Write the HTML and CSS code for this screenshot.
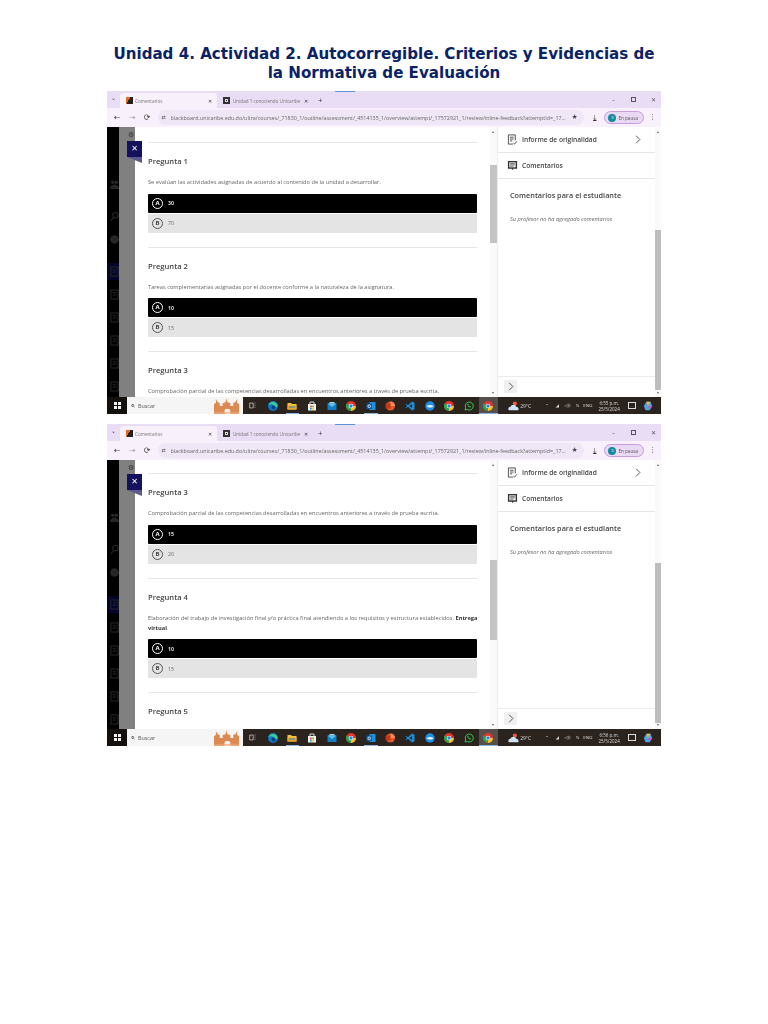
FILE: index.html
```html
<!DOCTYPE html>
<html lang="es">
<head>
<meta charset="utf-8">
<title>Unidad 4. Actividad 2</title>
<link rel="stylesheet" href="styles.css">
</head>
<body>
<svg class="defs" width="0" height="0" aria-hidden="true">
  <symbol id="chrome" viewBox="0 0 20 20"><circle cx="10" cy="10" r="10" fill="#e5352b"/><path d="M10 10 1.3 5A10 10 0 0 0 10 20z" fill="#2ea44f"/><path d="M10 10h10a10 10 0 0 1-10 10z" fill="#f7c325"/><circle cx="10" cy="10" r="4.6" fill="#fff"/><circle cx="10" cy="10" r="3.4" fill="#2f7fe0"/></symbol>
  <symbol id="edge" viewBox="0 0 20 20"><circle cx="10" cy="10" r="10" fill="#0f79c9"/><path d="M1 8C3 1 15-1 19 8c1 4-3 5-6 4 1-5-8-7-12-4z" fill="#3ecf8e"/><circle cx="11" cy="13" r="4" fill="#0b3f80"/></symbol>
  <symbol id="folder" viewBox="0 0 20 20"><path d="M1 4h7l2 2h9v11H1z" fill="#f5c542"/><path d="M1 9h18v8H1z" fill="#e8a825"/><path d="M4 11h12v2H4z" fill="#2a86c8"/></symbol>
  <symbol id="store" viewBox="0 0 20 20"><path d="M2 6h16v13H2z" fill="#f2f2f2"/><path d="M6 6V2h8v4" fill="none" stroke="#ddd" stroke-width="2"/><path d="M6 9h3.500v3.500H6z" fill="#e8502f"/><path d="M10.500 9H14v3.500h-3.500z" fill="#7db52f"/><path d="M6 13.500h3.500V17H6z" fill="#1f9be0"/><path d="M10.500 13.500H14V17h-3.500z" fill="#f5c023"/></symbol>
  <symbol id="mail" viewBox="0 0 20 20"><path d="M1 5h18v13H1z" fill="#1380c4"/><path d="M1 5h18l-9 7z" fill="#5cc1ee"/><path d="M5 2h10v3H5z" fill="#9adcf5"/></symbol>
  <symbol id="outlook" viewBox="0 0 20 20"><path d="M7 2h12v16H7z" fill="#1f8fe0"/><path d="M1 5h11v11H1z" fill="#0b5cab"/><circle cx="6.500" cy="10.500" r="2.600" fill="none" stroke="#fff" stroke-width="1.500"/></symbol>
  <symbol id="ppt" viewBox="0 0 20 20"><circle cx="11" cy="10" r="9" fill="#e8582f"/><path d="M11 1a9 9 0 0 1 9 9h-9z" fill="#f58b5c"/><path d="M1 5h10v10H1z" fill="#c0391b"/></symbol>
  <symbol id="vscode" viewBox="0 0 20 20"><path d="M14 1l5 2.500v13L14 19 6 11.500 2.500 14 1 13l3.500-3L1 7l1.500-1L6 8.500zM14 6l-5 4 5 4z" fill="#1b8fdc"/></symbol>
  <symbol id="bluebird" viewBox="0 0 20 20"><circle cx="10" cy="10" r="9.500" fill="#1c8fe6"/><path d="M3 10c3-3 11-3 14 0-2 4-11 4-14 0z" fill="#dff1fc"/></symbol>
  <symbol id="whatsapp" viewBox="0 0 20 20"><path d="M2 18l1.300-4.500A8 8 0 1 1 6.500 17z" fill="none" stroke="#37c75a" stroke-width="2"/><path d="M7 6c-1 2 2 7 6 7l1-2-2-1-1 1c-1-.5-2-1.500-2.500-2.500l1-1-1-2z" fill="#37c75a"/></symbol>
  <symbol id="report" viewBox="0 0 12 12"><path d="M1.500 1h7.500v6M1.500 1v10h5M3.200 3.500h4M3.200 5.500h4M3.200 7.500h2.500M7 10l1.200 1 2.500-3" fill="none" stroke="#333" stroke-width=".9"/></symbol>
  <symbol id="comment" viewBox="0 0 12 12"><path d="M1 1h10v8.500H7L6 11 5 9.500H1z" fill="#333"/><path d="M2.500 2.500h7v5.500h-7z" fill="#eee"/><path d="M3.500 3.700h5M3.500 5.200h5M3.500 6.700h3.500" stroke="#333" stroke-width=".7"/></symbol>
  <symbol id="chev" viewBox="0 0 8 12"><path d="M1.500 1l5 5-5 5" fill="none" stroke="#444" stroke-width="1.200"/></symbol>
  <symbol id="railicon" viewBox="0 0 10 12"><path d="M1 1h8v10H1zM3 4h4M3 6.500h4" fill="none" stroke="#262626" stroke-width="1.200"/></symbol>
  <symbol id="railperson" viewBox="0 0 10 12"><circle cx="3" cy="3.500" r="2" fill="#262626"/><circle cx="7" cy="3.500" r="2" fill="#262626"/><path d="M0 11c0-4 4-5 5-5s5 1 5 5z" fill="#262626"/></symbol>
  <symbol id="railsearch" viewBox="0 0 10 12"><circle cx="6" cy="4.500" r="3" fill="none" stroke="#262626" stroke-width="1.200"/><path d="M4 7 1 11" stroke="#262626" stroke-width="1.200"/></symbol>
  <symbol id="railglobe" viewBox="0 0 10 12"><circle cx="5" cy="6" r="4.800" fill="#262626"/></symbol>
  <symbol id="taskview" viewBox="0 0 10 10"><path d="M1 1.500h5v7H1zM8 1.500h1.200M8 4.500h1.200M8 7.500h1.200" fill="none" stroke="#ddd" stroke-width="1"/></symbol>
  <symbol id="palace" viewBox="0 0 26 16"><path d="M0 16V6l2-1v-4l2 3 2 1v3h3V5l3-1 1-4 1 4 3 1v3h3V5l2-1 2-3v4l2 1v10h-9v-3a1.500 1.500 0 0 0-4 0v3z" fill="#dc8a52"/><path d="M11 16v-3a2 2 0 0 1 4 0v3z" fill="#fff"/><path d="M0 14h26v2H0z" fill="#f0a36f" opacity=".7"/></symbol>
  <symbol id="cloud" viewBox="0 0 16 14"><circle cx="10" cy="3.500" r="3" fill="#ef5a3c"/><path d="M1 13c-1.500-3 .5-5 2.500-5C5 4 11 4 12 8c3 0 4 3 3 5z" fill="#cfe3f7"/></symbol>
  <symbol id="copilot" viewBox="0 0 12 12"><path d="M1 6 4 1h5l2 5-3 5H3z" fill="#4aa5e0"/><path d="M4 1h5L6 6z" fill="#f3b23c"/><path d="M6 6l5 0-3 5z" fill="#c55bd0"/></symbol>
</svg>

<main class="page">
  <h1 class="title">Unidad 4. Actividad 2. Autocorregible. Criterios y Evidencias de la Normativa de Evaluación</h1>

  <section class="window">
    <div class="tabstrip">
      <span class="tab-menu">⌄</span>
      <div class="tab tab-active"><span class="favicon favicon-bb"></span><span class="tab-label">Comentarios</span><span class="tab-x">✕</span></div>
      <div class="tab"><span class="favicon favicon-doc"></span><span class="tab-label">Unidad 1 conociendo Unicaribe</span><span class="tab-x">✕</span></div>
      <span class="tab-plus">+</span>
      <span class="tab-mark"></span>
      <div class="win-controls"><span>–</span><span class="win-restore"></span><span>✕</span></div>
    </div>
    <div class="toolbar">
      <span class="nav">←</span><span class="nav nav-dim">→</span><span class="nav">⟳</span>
      <div class="omnibox"><span class="tune">⇄</span><span class="url">blackboard.unicaribe.edu.do/ultra/courses/_71830_1/outline/assessment/_4514135_1/overview/attempt/_17572921_1/review/inline-feedback?attemptId=_17...</span><span class="star">★</span></div>
      <span class="download">⤓</span>
      <div class="pill"><span class="pill-dot">S</span><span class="pill-text">En pausa</span></div>
      <span class="kebab">⋮</span>
    </div>
    <div class="content">
      <div class="rail-black">
        <svg class="rail-svg"><use href="#railperson"/></svg>
        <svg class="rail-svg rail-gap"><use href="#railsearch"/></svg>
        <svg class="rail-svg"><use href="#railglobe"/></svg>
        <svg class="rail-svg rail-on rail-gap"><use href="#railicon"/></svg>
        <svg class="rail-svg"><use href="#railicon"/></svg>
        <svg class="rail-svg"><use href="#railicon"/></svg>
        <svg class="rail-svg"><use href="#railicon"/></svg>
        <svg class="rail-svg"><use href="#railicon"/></svg>
        <svg class="rail-svg"><use href="#railicon"/></svg>
      </div>
      <div class="rail-gray"><span class="gear">⚙</span></div>
      <button class="close-flag" type="button">✕</button>
      <div class="main-col">
        <article class="question">
          <h2>Pregunta 1</h2>
          <p>Se evalúan las actividades asignadas de acuerdo al contenido de la unidad a desarrollar.</p>
          <div class="answer answer-on"><span class="letter">A</span><span>30</span></div>
          <div class="answer"><span class="letter">B</span><span>70</span></div>
        </article>
        <article class="question">
          <h2>Pregunta 2</h2>
          <p>Tareas complementarias asignadas por el docente conforme a la naturaleza de la asignatura.</p>
          <div class="answer answer-on"><span class="letter">A</span><span>10</span></div>
          <div class="answer"><span class="letter">B</span><span>15</span></div>
        </article>
        <article class="question">
          <h2>Pregunta 3</h2>
          <p>Comprobación parcial de las competencias desarrolladas en encuentros anteriores a través de prueba escrita.</p>
        </article>
      </div>
      <div class="scrollbar"><span class="thumb thumb-a"></span></div>
      <aside class="panel">
        <div class="panel-row"><svg class="panel-icon"><use href="#report"/></svg><span class="panel-label">Informe de originalidad</span><svg class="panel-chev"><use href="#chev"/></svg></div>
        <div class="panel-row"><svg class="panel-icon"><use href="#comment"/></svg><span class="panel-label">Comentarios</span></div>
        <div class="panel-body">
          <h3>Comentarios para el estudiante</h3>
          <p>Su profesor no ha agregado comentarios</p>
        </div>
        <div class="panel-foot"><span class="foot-btn"><svg class="foot-chev"><use href="#chev"/></svg></span></div>
      </aside>
      <div class="scrollbar scrollbar-thin"><span class="thumb thumb-b"></span></div>
    </div>
    <div class="taskbar">
      <span class="start"><i></i><i></i><i></i><i></i></span>
      <div class="searchbox"><span class="lens">⌕</span><span class="search-text">Buscar</span><svg class="palace"><use href="#palace"/></svg></div>
      <svg class="tb-view"><use href="#taskview"/></svg>
      <span class="tb"><svg><use href="#edge"/></svg></span>
      <span class="tb tb-open"><svg><use href="#folder"/></svg></span>
      <span class="tb"><svg><use href="#store"/></svg></span>
      <span class="tb"><svg><use href="#mail"/></svg></span>
      <span class="tb"><svg><use href="#chrome"/></svg></span>
      <span class="tb tb-open"><svg><use href="#outlook"/></svg></span>
      <span class="tb"><svg><use href="#ppt"/></svg></span>
      <span class="tb"><svg><use href="#vscode"/></svg></span>
      <span class="tb"><svg><use href="#bluebird"/></svg></span>
      <span class="tb"><svg><use href="#chrome"/></svg></span>
      <span class="tb"><svg><use href="#whatsapp"/></svg></span>
      <span class="tb tb-active"><svg><use href="#chrome"/></svg></span>
      <div class="tray">
        <svg class="tray-cloud"><use href="#cloud"/></svg><span class="tray-temp">29°C</span>
        <span class="tray-item">^</span><span class="tray-item">◢</span><span class="tray-item">◁))</span><span class="tray-item">ℕ</span><span class="tray-item">ENG</span>
        <span class="clock"><span>6:55 p.m.</span><span>25/5/2024</span></span>
        <span class="notif"></span>
        <svg class="tray-copilot"><use href="#copilot"/></svg>
      </div>
    </div>
  </section>

  <section class="window window-second">
    <div class="tabstrip">
      <span class="tab-menu">⌄</span>
      <div class="tab tab-active"><span class="favicon favicon-bb"></span><span class="tab-label">Comentarios</span><span class="tab-x">✕</span></div>
      <div class="tab"><span class="favicon favicon-doc"></span><span class="tab-label">Unidad 1 conociendo Unicaribe</span><span class="tab-x">✕</span></div>
      <span class="tab-plus">+</span>
      <span class="tab-mark"></span>
      <div class="win-controls"><span>–</span><span class="win-restore"></span><span>✕</span></div>
    </div>
    <div class="toolbar">
      <span class="nav">←</span><span class="nav nav-dim">→</span><span class="nav">⟳</span>
      <div class="omnibox"><span class="tune">⇄</span><span class="url">blackboard.unicaribe.edu.do/ultra/courses/_71830_1/outline/assessment/_4514135_1/overview/attempt/_17572921_1/review/inline-feedback?attemptId=_17...</span><span class="star">★</span></div>
      <span class="download">⤓</span>
      <div class="pill"><span class="pill-dot">S</span><span class="pill-text">En pausa</span></div>
      <span class="kebab">⋮</span>
    </div>
    <div class="content">
      <div class="rail-black">
        <svg class="rail-svg"><use href="#railperson"/></svg>
        <svg class="rail-svg rail-gap"><use href="#railsearch"/></svg>
        <svg class="rail-svg"><use href="#railglobe"/></svg>
        <svg class="rail-svg rail-on rail-gap"><use href="#railicon"/></svg>
        <svg class="rail-svg"><use href="#railicon"/></svg>
        <svg class="rail-svg"><use href="#railicon"/></svg>
        <svg class="rail-svg"><use href="#railicon"/></svg>
        <svg class="rail-svg"><use href="#railicon"/></svg>
        <svg class="rail-svg"><use href="#railicon"/></svg>
      </div>
      <div class="rail-gray"><span class="gear">⚙</span></div>
      <button class="close-flag" type="button">✕</button>
      <div class="main-col main-col-second">
        <article class="question">
          <h2>Pregunta 3</h2>
          <p>Comprobación parcial de las competencias desarrolladas en encuentros anteriores a través de prueba escrita.</p>
          <div class="answer answer-on"><span class="letter">A</span><span>15</span></div>
          <div class="answer"><span class="letter">B</span><span>20</span></div>
        </article>
        <article class="question">
          <h2>Pregunta 4</h2>
          <p>Elaboración del trabajo de investigación final y/o práctica final atendiendo a los requisitos y estructura establecidos. <strong>Entrega virtual</strong>.</p>
          <div class="answer answer-on"><span class="letter">A</span><span>10</span></div>
          <div class="answer"><span class="letter">B</span><span>15</span></div>
        </article>
        <article class="question">
          <h2>Pregunta 5</h2>
        </article>
      </div>
      <div class="scrollbar"><span class="thumb thumb-c"></span></div>
      <aside class="panel">
        <div class="panel-row"><svg class="panel-icon"><use href="#report"/></svg><span class="panel-label">Informe de originalidad</span><svg class="panel-chev"><use href="#chev"/></svg></div>
        <div class="panel-row"><svg class="panel-icon"><use href="#comment"/></svg><span class="panel-label">Comentarios</span></div>
        <div class="panel-body">
          <h3>Comentarios para el estudiante</h3>
          <p>Su profesor no ha agregado comentarios</p>
        </div>
        <div class="panel-foot"><span class="foot-btn"><svg class="foot-chev"><use href="#chev"/></svg></span></div>
      </aside>
      <div class="scrollbar scrollbar-thin"><span class="thumb thumb-b"></span></div>
    </div>
    <div class="taskbar">
      <span class="start"><i></i><i></i><i></i><i></i></span>
      <div class="searchbox"><span class="lens">⌕</span><span class="search-text">Buscar</span><svg class="palace"><use href="#palace"/></svg></div>
      <svg class="tb-view"><use href="#taskview"/></svg>
      <span class="tb"><svg><use href="#edge"/></svg></span>
      <span class="tb tb-open"><svg><use href="#folder"/></svg></span>
      <span class="tb"><svg><use href="#store"/></svg></span>
      <span class="tb"><svg><use href="#mail"/></svg></span>
      <span class="tb"><svg><use href="#chrome"/></svg></span>
      <span class="tb tb-open"><svg><use href="#outlook"/></svg></span>
      <span class="tb"><svg><use href="#ppt"/></svg></span>
      <span class="tb"><svg><use href="#vscode"/></svg></span>
      <span class="tb"><svg><use href="#bluebird"/></svg></span>
      <span class="tb"><svg><use href="#chrome"/></svg></span>
      <span class="tb"><svg><use href="#whatsapp"/></svg></span>
      <span class="tb tb-active"><svg><use href="#chrome"/></svg></span>
      <div class="tray">
        <svg class="tray-cloud"><use href="#cloud"/></svg><span class="tray-temp">29°C</span>
        <span class="tray-item">^</span><span class="tray-item">◢</span><span class="tray-item">◁))</span><span class="tray-item">ℕ</span><span class="tray-item">ENG</span>
        <span class="clock"><span>6:56 p.m.</span><span>25/5/2024</span></span>
        <span class="notif"></span>
        <svg class="tray-copilot"><use href="#copilot"/></svg>
      </div>
    </div>
  </section>
</main>
</body>
</html>
```

FILE: styles.css
```css
* { box-sizing: border-box; }
html, body { margin: 0; background: #fff; }
body { font-family: "Open Sans", sans-serif; height: 1024px; overflow: hidden; }
.defs { position: absolute; }

.page { padding: 45px 0 0 107px; width: 768px; }
.title {
  margin: 0 0 8px; width: 554px;
  font: bold 15.1px/19px "DejaVu Sans", sans-serif;
  color: #0b2265; text-align: center;
}

.window {
  position: relative; width: 554px; height: 323px; margin-bottom: 10px;
  display: flex; flex-direction: column; overflow: hidden;
  background: #fff; filter: blur(.4px);
}
.window-second { height: 322px; }

.tabstrip { height: 17px; flex: none; background: #e9dcf5; display: flex; align-items: flex-end; position: relative; color: #555; }
.tab-menu { width: 13px; height: 15px; font-size: 6px; line-height: 12px; text-align: center; align-self: center; color: #444; }
.tab { width: 97px; height: 15px; display: flex; align-items: center; padding: 0 5px 0 6px; gap: 2px; border-radius: 4px 4px 0 0; font-size: 4.6px; color: #777; margin-right: 4px; }
.tab-active { background: #f8f1fb; }
.tab + .tab { width: 92px; padding-left: 2px; gap: 3px; }
.tab-label { flex: 1; white-space: nowrap; overflow: hidden; }
.tab-x { font-size: 5px; color: #333; }
.favicon { width: 7px; height: 7px; flex: none; }
.favicon-bb { background: linear-gradient(120deg, #e26a1c 0 40%, #222 40%); }
.favicon-doc { background: #222; border: 2px solid #333; box-shadow: inset 0 0 0 1px #ddd; }
.tab-plus { font-size: 8px; line-height: 13px; height: 15px; margin-left: 1px; color: #444; }
.tab-mark { position: absolute; left: 228px; top: 0; width: 20px; height: 1px; background: #5b93d8; }
.win-controls { margin-left: auto; width: 49px; height: 17px; display: flex; align-items: center; justify-content: space-between; padding-right: 5px; font-size: 6px; color: #555; }
.win-restore { width: 5px; height: 5px; border: 1px solid #555; }

.toolbar { height: 19px; flex: none; background: #f8f1fb; display: flex; align-items: center; padding-left: 3px; color: #555; }
.nav { width: 15px; text-align: center; font: 8px/1 "DejaVu Sans", sans-serif; color: #444; }
.nav-dim { color: #999; }
.omnibox { margin-left: 3px; width: 430px; height: 15px; background: #efe7f6; border-radius: 8px; display: flex; align-items: center; padding: 0 6px 0 4px; }
.tune { width: 9px; flex: none; font: 5px/1 "DejaVu Sans", sans-serif; color: #444; }
.url { flex: 1; font-size: 5.37px; color: #666; white-space: nowrap; overflow: hidden; }
.star { font: 7px/1 "DejaVu Sans", sans-serif; color: #444; }
.download { width: 19px; margin-left: 2px; text-align: center; font: 8px/1 "DejaVu Sans", sans-serif; color: #333; }
.pill { width: 40px; height: 13px; border: 1px solid #c79ddf; border-radius: 7px; background: #ead9f5; display: flex; align-items: center; padding-left: 3px; gap: 2px; }
.pill-dot { width: 8px; height: 8px; border-radius: 50%; background: #138a9e; color: #fff; font-size: 4px; line-height: 8px; text-align: center; }
.pill-text { font-size: 4.6px; color: #555; white-space: nowrap; }
.kebab { width: 17px; text-align: center; font: 7px/1 "DejaVu Sans", sans-serif; color: #444; }

.content { flex: 1; min-height: 0; display: flex; position: relative; background: #fff; }
.rail-black { width: 12px; flex: none; background: #000; display: flex; flex-direction: column; align-items: center; padding: 52px 0 0 3px; gap: 12px; overflow: hidden; }
.rail-svg { width: 9px; height: 11px; flex: none; }
.rail-gap { margin-top: 9px; }
.rail-on { box-shadow: 0 0 0 3px #05052a; background: #05052a; }
.rail-gray { width: 16px; flex: none; background: #808080; padding-left: 9px; }
.gear { display: block; margin-top: 5px; font: 7px/1 "DejaVu Sans", sans-serif; color: #333; }
.close-flag {
  position: absolute; left: 20px; top: 14px; width: 15px; height: 16px; padding: 0; border: 0;
  background: #14125c; color: #fff; font: bold 8px/16px "DejaVu Sans", sans-serif; text-align: center;
}
.close-flag::after {
  content: ""; position: absolute; left: 0; top: 16px; width: 0; height: 0;
  border-top: 6px solid #5a5a8c; border-left: 15px solid transparent;
}

.main-col { width: 355px; flex: none; padding: 15px 13px 0; overflow: hidden; }
.main-col-second { padding-top: 13px; }
.question { border-top: 1px solid #e6e6e6; padding: 12px 0 14px; }
.question h2 { margin: 0; font-size: 7.6px; line-height: 12px; font-weight: 600; color: #444; }
.question p { margin: 10px -3px 6.5px 0; font-size: 5.7px; line-height: 10px; color: #666; }
.question strong { color: #333; }
.answer { height: 19px; background: #e4e4e4; display: flex; align-items: center; padding-left: 4px; gap: 5px; font-size: 5.2px; color: #666; border-radius: 1px; }
.answer + .answer { margin-top: 1px; }
.answer-on { background: #000; color: #ddd; font-weight: 700; }
.letter { width: 11px; height: 11px; border: 1px solid #555; border-radius: 50%; font-size: 6px; line-height: 9px; font-weight: 700; text-align: center; color: #444; }
.answer-on .letter { border-color: #fff; color: #fff; }

.scrollbar { width: 7px; flex: none; background: #fafafa; display: flex; flex-direction: column; position: relative; }
.scrollbar::before, .scrollbar::after { content: ""; position: absolute; left: 2px; width: 0; height: 0; border-left: 1.5px solid transparent; border-right: 1.5px solid transparent; }
.scrollbar::before { top: 4px; border-bottom: 2px solid #666; }
.scrollbar::after { bottom: 3px; border-top: 2px solid #666; }
.scrollbar-thin { width: 6px; }
.thumb { width: 100%; background: #c4c4c4; }
.thumb-a { margin-top: 38px; height: 78px; }
.thumb-b { margin-top: 103px; height: 160px; background: #bdbdbd; }
.thumb-c { margin-top: 100px; height: 80px; }

.panel { width: 158px; flex: none; display: flex; flex-direction: column; border-left: 1px solid #ececec; }
.panel-row { height: 26px; flex: none; display: flex; align-items: center; padding: 0 14px 0 9px; gap: 4px; border-bottom: 1px solid #e6e6e6; }
.panel-icon { width: 11px; height: 11px; flex: none; }
.panel-label { flex: 1; font-size: 6.6px; font-weight: 600; color: #444; white-space: nowrap; }
.panel-chev { width: 6px; height: 9px; flex: none; }
.panel-body { flex: 1; padding: 10px 12px 0; }
.panel-body h3 { margin: 0; font-size: 7.3px; line-height: 12px; font-weight: 600; color: #444; white-space: nowrap; }
.panel-body p { margin: 13px 0 0; font-size: 5.65px; line-height: 10px; font-style: italic; color: #666; white-space: nowrap; }
.panel-foot { height: 21px; flex: none; border-top: 1px solid #ececec; padding: 3px 0 0 6px; }
.foot-btn { display: flex; align-items: center; justify-content: center; width: 13px; height: 13px; background: #f0f0f0; }
.foot-chev { width: 6px; height: 9px; }

.taskbar { height: 17px; flex: none; background: #2b231d; display: flex; align-items: center; position: relative; }
.start { width: 20px; height: 17px; flex: none; background: #14100c; display: grid; grid-template-columns: 3px 3px; grid-template-rows: 3px 3px; gap: 1px; align-content: center; justify-content: center; }
.start i { background: #f4f4f4; }
.searchbox { width: 116px; height: 17px; background: #f5f5f5; display: flex; align-items: center; padding-left: 4px; gap: 3px; flex: none; }
.lens { font: 8px/1 "DejaVu Sans", sans-serif; color: #555; transform: scaleX(-1); }
.search-text { flex: 1; font-size: 5.4px; color: #555; }
.palace { width: 25px; height: 16px; margin-right: 4px; align-self: flex-end; flex: none; }
.tb-view { width: 7px; height: 7px; margin: 0 7px 0 6px; flex: none; }
.tb { width: 19.6px; height: 17px; flex: none; display: flex; align-items: center; justify-content: center; position: relative; }
.tb svg { width: 10px; height: 10px; }
.tb-open::after { content: ""; position: absolute; left: 3px; right: 3px; bottom: 0; height: 1px; background: #8ab4e0; }
.tb-active { background: #55504b; }
.tb-active::after { content: ""; position: absolute; left: 0; right: 0; bottom: 0; height: 1px; background: #8ab4e0; }
.tray { display: flex; align-items: center; margin-left: 10px; color: #ddd; font-size: 5px; white-space: nowrap; flex: none; }
.tray-cloud { width: 11px; height: 10px; flex: none; }
.tray-temp { margin-left: 1px; width: 18px; }
.tray-item { margin-right: .2px; width: 10px; text-align: center; font-size: 4.2px; font-family: "DejaVu Sans", sans-serif; overflow: hidden; }
.tray-temp + .tray-item { margin-left: 4px; }
.clock { display: flex; flex-direction: column; align-items: center; font-size: 4.5px; line-height: 6px; margin-left: 3px; width: 26px; }
.notif { width: 8px; height: 7px; border: 1px solid #ddd; margin-left: 6px; flex: none; }
.tray-copilot { width: 10px; height: 10px; margin-left: 7px; flex: none; }
```
